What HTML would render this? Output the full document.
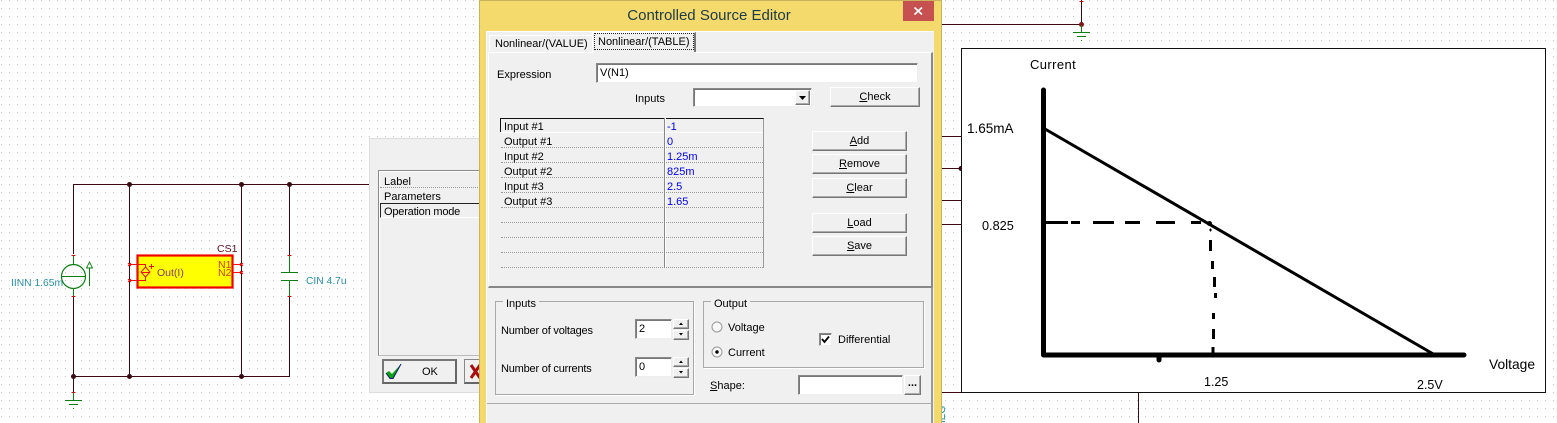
<!DOCTYPE html>
<html><head><meta charset="utf-8"><style>
html,body{margin:0;padding:0}
body{width:1557px;height:423px;overflow:hidden;background:#fff;position:relative;font:11px "Liberation Sans",sans-serif;color:#000}
svg{position:absolute;left:0;top:0}
.a{position:absolute;box-sizing:border-box}
.t{position:absolute;white-space:nowrap;line-height:14px;margin-top:1px}
.s{letter-spacing:-.2px}
.b{position:absolute;box-sizing:border-box;background:#f0f0f0;border:1px solid;border-color:#fff #777 #777 #fff;box-shadow:inset -1px -1px 0 #aaa;text-align:center;line-height:19px}
.i{position:absolute;box-sizing:border-box;background:#fff;border:1px solid;border-color:#888 #eee #eee #888;box-shadow:inset 1px 1px 0 #777;line-height:18px;padding-left:3px}
.g{position:absolute;box-sizing:border-box;border:1px solid #a8a8a8;box-shadow:1px 1px 0 #fff}
.l{position:absolute;background:#f0f0f0;padding:0 3px;line-height:13px;margin-top:1px}
.r{border-top:1px dotted #999;position:absolute;left:501px;width:262px;height:0}
.v{color:#0000f0}
u{text-decoration:underline}
</style></head><body>
<svg width="1557" height="423" viewBox="0 0 1557 423">
<defs><pattern id="d" width="8" height="8" patternUnits="userSpaceOnUse"><rect x="1" y="0" width="1" height="1" fill="#c4c4c4"/></pattern></defs>
<rect width="1557" height="423" fill="#fff"/><rect width="1557" height="423" fill="url(#d)"/>
<g fill="none" stroke="#3a0a12" stroke-width="1" shape-rendering="crispEdges">
<path d="M73.5 254V184.5H370M129.5 184.5V376.5M241.5 184.5V376.5M289.5 184.5V255M73.5 297V376.5H289.5V297M73.5 376.5V392"/>
<path d="M941 24.5H1081M941 136.5H962M941 168.5H962M941 200.5H962M941 224.5H962M941 392.5H962M1138.5 393V423M1081.5 0V24"/>
</g>
<g fill="#3a0a12"><circle cx="129.5" cy="184.5" r="2.5"/><circle cx="241.5" cy="184.5" r="2.5"/><circle cx="289.5" cy="184.5" r="2.5"/><circle cx="73.5" cy="376.5" r="2.5"/><circle cx="129.5" cy="376.5" r="2.5"/><circle cx="241.5" cy="376.5" r="2.5"/><circle cx="961" cy="168.5" r="2.5"/></g>
<circle cx="1081.5" cy="24.5" r="2.5" fill="#8a1018"/>
<g fill="none" stroke="#0a8010" stroke-width="1" shape-rendering="crispEdges">
<path d="M73.5 255V264M73.5 289V297M62 276.5H85M89.5 286V268M86.5 268H92.5L89.5 262Z"/>
<path d="M65 400.5H82M69 404.5H78M73.5 392V400M73.5 408V409"/>
<path d="M289.5 256V272M281 272.5H298M281 280.5H298M289.5 281V296"/>
<path d="M1073 32.5H1090M1077 36.5H1086M1081.5 25V32M1081.5 40V41"/>
</g>
<circle cx="73.5" cy="276.5" r="12" fill="none" stroke="#0a8010" stroke-width="1.2"/>
<g stroke="#d01010" stroke-width="1" shape-rendering="crispEdges" fill="none">
<path d="M71.5 255.5h4M71.5 296.5h4M287.5 255.5h4M287.5 296.5h4M71.5 392.5h4M1079.5 1.5h4"/>
</g>
<rect x="137.5" y="255.5" width="95" height="32" fill="#ffff00" stroke="#f00000" stroke-width="2.2"/>
<g fill="none" stroke="#f01010" stroke-width="1" shape-rendering="crispEdges">
<path d="M129 264.5H145.5V267M129 280.5H145.5V277M233 264.5H242M233 272.5H242M141 272.5H150M149 266.5h5M151.5 264V269"/>
<path d="M145.5 267L141 272L145.5 277L150 272Z" shape-rendering="auto"/>
<path d="M128 263l3 3M131 263l-3 3M128 279l3 3M131 279l-3 3M240 263l3 3M243 263l-3 3M240 271l3 3M243 271l-3 3" shape-rendering="auto"/>
</g>
<text x="11" y="286" font-family="Liberation Sans" font-size="10.3" fill="#2c8ea6">IINN 1.65m</text>
<text x="306" y="284" font-family="Liberation Sans" font-size="10.3" fill="#2c8ea6">CIN 4.7u</text>
<text x="217" y="252" font-family="Liberation Sans" font-size="10.5" fill="#5a1226">CS1</text>
<text x="157" y="276" font-family="Liberation Sans" font-size="10.5" fill="#803a70">Out(I)</text>
<text x="218" y="268" font-family="Liberation Sans" font-size="10.5" fill="#c84010">N1</text>
<text x="218" y="276" font-family="Liberation Sans" font-size="10.5" fill="#c84010">N2</text>
<text x="0" y="0" transform="translate(945 423) rotate(-90)" font-family="Liberation Sans" font-size="10" fill="#0f8ea0">IEG</text>
</svg>

<!-- back dialog -->
<div class="a" style="left:369px;top:138px;width:115px;height:255px;background:#f0f0f0;border:1px solid #ddd"></div>
<div class="a" style="left:378px;top:170px;width:105px;height:186px;background:#f0f0f0;border:1px solid;border-color:#888 #888 #bbb #888;box-shadow:inset 1px 1px 0 #fff"></div>
<div class="t" style="left:384px;top:174px">Label</div>
<div class="a" style="left:380px;top:187px;width:100px;border-top:1px dotted #999"></div>
<div class="t" style="left:384px;top:189px">Parameters</div>
<div class="a" style="left:380px;top:203px;width:100px;height:15px;border-top:1px solid #222;border-left:1px solid #222;border-bottom:1px solid #fff"></div>
<div class="t s" style="left:384px;top:204px">Operation mode</div>
<div class="a" style="left:382px;top:359px;width:75px;height:25px;background:#f0f0f0;border:2px solid #666;border-top-color:#777;border-left-color:#777"></div>
<svg style="left:385px;top:363px" width="20" height="18" viewBox="0 0 20 18"><path d="M1 10L4 8L7 11L16 1L8 15H5Z" fill="#0ca010"/><path d="M1 10L5 15.5H8L16 1" fill="none" stroke="#061a70" stroke-width="1"/></svg>
<div class="t" style="left:422px;top:364px">OK</div>
<div class="a" style="left:464px;top:359px;width:20px;height:25px;background:#f0f0f0;border:1px solid #888;border-bottom:2px solid #666"></div>
<svg style="left:470px;top:363px" width="12" height="18" viewBox="0 0 12 18"><path d="M1 2L10 15M10 2L1 15" stroke="#a80c0c" stroke-width="3" fill="none"/></svg>

<!-- main dialog -->
<div class="a" style="left:479px;top:0;width:463px;height:423px;background:#f4d96d;border-left:1px solid #c9b35d;border-right:1px solid #c9b35d;border-top:1px solid #c9b35d"></div>
<div class="a" style="left:903px;top:1px;width:31px;height:20px;background:#c75050"></div>
<svg style="left:903px;top:1px" width="31" height="20" viewBox="0 0 31 20"><path d="M11.5 6.5L19 13.5M19 6.5L11.5 13.5" stroke="#fff" stroke-width="1.7" fill="none"/></svg>
<div class="t" style="left:479px;top:5px;width:460px;text-align:center;font-size:15px;line-height:19px;color:#1c3a48">Controlled Source Editor</div>
<div class="a" style="left:486px;top:31px;width:448px;height:392px;background:#f0f0f0;border-left:1px solid #fff;border-top:1px solid #fff"></div>
<!-- tabs -->
<div class="a" style="left:489px;top:35px;width:104px;height:17px;background:#f0f0f0;border-top:1px solid #fff;border-left:1px solid #fff"></div>
<div class="a" style="left:592px;top:32px;width:104px;height:20px;background:#f0f0f0;border-top:1px solid #fff;border-left:1px solid #fff;border-right:2px solid #777"></div>
<div class="a" style="left:594px;top:33px;width:100px;height:17px;border:1px dotted #222"></div>
<div class="t" style="left:495px;top:36px">Nonlinear/(VALUE)</div>
<div class="t" style="left:598px;top:34px">Nonlinear/(TABLE)</div>
<!-- tab panel -->
<div class="a" style="left:488px;top:52px;width:445px;height:236px;background:#f0f0f0;border-top:1px solid #fff;border-left:1px solid #fff;border-right:2px solid #888;border-bottom:2px solid #888"></div>
<div class="a" style="left:593px;top:51px;width:101px;height:3px;background:#f0f0f0"></div>
<div class="t" style="left:497px;top:67px">Expression</div>
<div class="i" style="left:596px;top:63px;width:322px;height:20px">V(N1)</div>
<div class="t" style="left:635px;top:91px">Inputs</div>
<div class="i" style="left:693px;top:88px;width:119px;height:19px"></div>
<div class="b" style="left:795px;top:90px;width:15px;height:15px"></div>
<svg style="left:798px;top:95px" width="10" height="6"><path d="M1 1H8L4.5 5Z" fill="#000"/></svg>
<div class="b" style="left:830px;top:87px;width:90px;height:20px"><u>C</u>heck</div>

<!-- grid -->
<div class="a" style="left:500px;top:118px;width:264px;height:150px;border-top:1px solid #111;border-right:1px solid #999"></div>
<div class="r" style="top:147px"></div><div class="r" style="top:162px"></div><div class="r" style="top:177px"></div><div class="r" style="top:192px"></div><div class="r" style="top:207px"></div><div class="r" style="top:222px"></div><div class="r" style="top:237px"></div><div class="r" style="top:252px"></div><div class="r" style="top:267px"></div>
<div class="a" style="left:501px;top:132px;width:262px;border-top:1px solid #fff"></div>
<div class="a" style="left:500px;top:119px;height:13px;border-left:1px solid #111"></div>
<div class="a" style="left:664px;top:118px;height:150px;border-left:1px solid #888;border-right:1px solid #fff;width:2px"></div>
<div class="t" style="left:504px;top:119px">Input #1</div><div class="t v" style="left:667px;top:119px">-1</div>
<div class="t" style="left:504px;top:134px">Output #1</div><div class="t v" style="left:667px;top:134px">0</div>
<div class="t" style="left:504px;top:149px">Input #2</div><div class="t v" style="left:667px;top:149px">1.25m</div>
<div class="t" style="left:504px;top:164px">Output #2</div><div class="t v" style="left:667px;top:164px">825m</div>
<div class="t" style="left:504px;top:179px">Input #3</div><div class="t v" style="left:667px;top:179px">2.5</div>
<div class="t" style="left:504px;top:194px">Output #3</div><div class="t v" style="left:667px;top:194px">1.65</div>

<div class="b" style="left:812px;top:131px;width:95px;height:20px"><u>A</u>dd</div>
<div class="b" style="left:812px;top:154px;width:95px;height:20px"><u>R</u>emove</div>
<div class="b" style="left:812px;top:178px;width:95px;height:20px"><u>C</u>lear</div>
<div class="b" style="left:812px;top:213px;width:95px;height:20px"><u>L</u>oad</div>
<div class="b" style="left:812px;top:236px;width:95px;height:20px"><u>S</u>ave</div>

<!-- bottom -->
<div class="a" style="left:487px;top:288px;width:446px;height:135px;background:#f0f0f0;border-right:2px solid #999"></div>
<div class="a" style="left:487px;top:403px;width:445px;border-top:1px solid #aaa"></div>
<div class="g" style="left:495px;top:301px;width:199px;height:94px"></div>
<div class="l" style="left:503px;top:297px">Inputs</div>
<div class="g" style="left:703px;top:301px;width:221px;height:67px"></div>
<div class="l" style="left:711px;top:297px">Output</div>
<div class="t s" style="left:501px;top:323px">Number of voltages</div>
<div class="i" style="left:635px;top:319px;width:37px;height:20px">2</div>
<div class="b" style="left:673px;top:319px;width:16px;height:10px"></div>
<div class="b" style="left:673px;top:330px;width:16px;height:10px"></div>
<div class="t s" style="left:501px;top:361px">Number of currents</div>
<div class="i" style="left:635px;top:357px;width:37px;height:20px">0</div>
<div class="b" style="left:673px;top:357px;width:16px;height:10px"></div>
<div class="b" style="left:673px;top:368px;width:16px;height:10px"></div>
<svg style="left:673px;top:319px" width="16" height="60"><path d="M6 6H10L8 3.5ZM6 14H10L8 16.5ZM6 44H10L8 41.5ZM6 52H10L8 54.5Z" fill="#000"/></svg>
<svg style="left:710px;top:320px" width="14" height="40"><circle cx="7" cy="7" r="5" fill="#f8f8f8" stroke="#999"/><circle cx="7" cy="32" r="5" fill="#f8f8f8" stroke="#999"/><circle cx="7" cy="32" r="1.7" fill="#000"/></svg>
<div class="t" style="left:728px;top:320px">Voltage</div>
<div class="t" style="left:728px;top:345px">Current</div>
<div class="i" style="left:819px;top:333px;width:13px;height:13px;padding:0"></div>
<svg style="left:819px;top:333px" width="13" height="13"><path d="M3 6L5.5 9L10 3.5" fill="none" stroke="#000" stroke-width="1.8"/></svg>
<div class="t" style="left:838px;top:332px">Differential</div>
<div class="t" style="left:710px;top:378px"><u>S</u>hape:</div>
<div class="i" style="left:798px;top:375px;width:105px;height:20px"></div>
<div class="b" style="left:904px;top:375px;width:17px;height:20px;font-weight:bold;line-height:14px">...</div>

<!-- chart -->
<div class="a" style="left:961px;top:48px;width:585px;height:345px;background:#fff;border:1px solid #111"></div>
<svg width="1557" height="423" viewBox="0 0 1557 423" style="pointer-events:none">
<g stroke="#000" fill="none">
<path d="M1043.5 90V355H1464" stroke-width="5" stroke-linecap="round" stroke-linejoin="round"/>
<path d="M1045 129L1435 355" stroke-width="3"/>
<path d="M1046 222.5H1068M1071 222.5H1080M1093 222.5H1114M1125 222.5H1140M1156 222.5H1175M1191 222.5H1201" stroke-width="3"/>
<path d="M1210.5 240V251M1212.5 261V269M1214.5 277V287M1215.5 293V298M1213.500 313V319M1213.500 329V339M1213 347V353" stroke-width="3"/>
<path d="M1209 230H1212M1210.500 228.500V231.500" stroke-width="1"/>
<path d="M1159 357V360" stroke-width="5" stroke-linecap="round"/>
</g>
<circle cx="1209.500" cy="223.500" r="2.500" fill="#000"/>
</svg>
<div class="t" style="left:1030px;top:57px;font-size:13px;letter-spacing:.4px">Current</div>
<div class="t" style="left:967px;top:121px;font-size:13.5px">1.65mA</div>
<div class="t" style="left:982px;top:218px;font-size:12.7px">0.825</div>
<div class="t" style="left:1204px;top:374px;font-size:12.5px">1.25</div>
<div class="t" style="left:1417px;top:377px;font-size:12.5px">2.5V</div>
<div class="t" style="left:1489px;top:357px;font-size:13.8px">Voltage</div>
</body></html>
